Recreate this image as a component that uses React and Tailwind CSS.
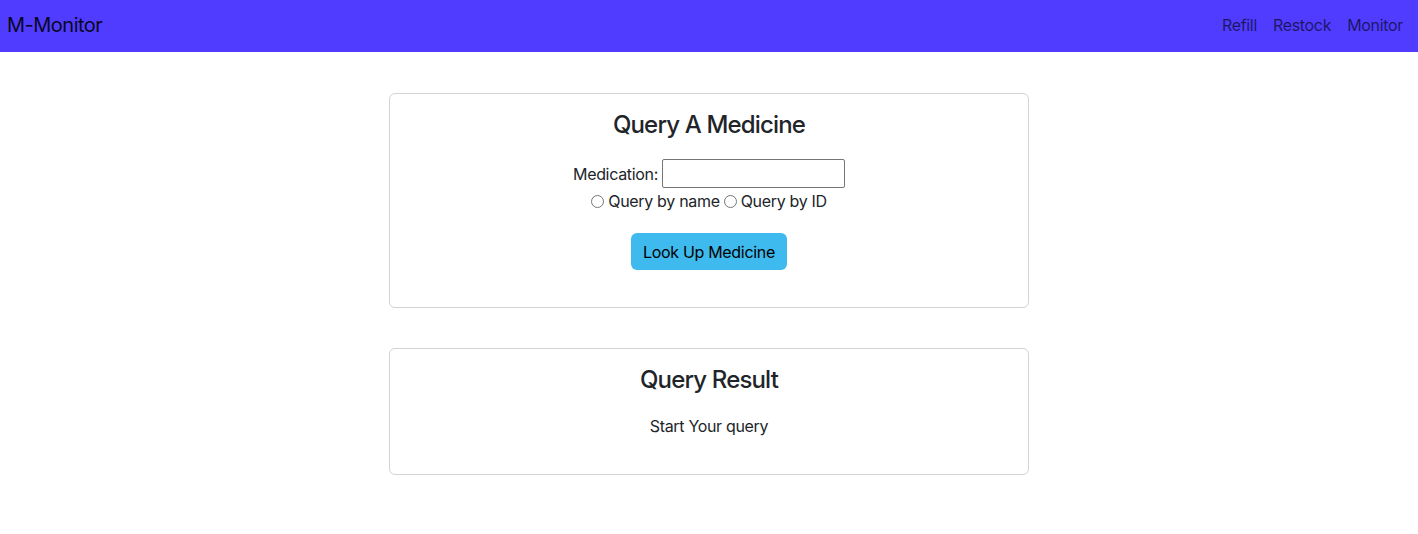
import React from "react";

export default function App() {
  return (
    <div className="min-h-[534px] bg-white text-[#212529] tracking-[-0.02em]" style={{ fontFamily: "Inter, 'Noto Sans', sans-serif" }}>
      <nav className="flex h-[52px] items-center justify-between bg-[#4f3cff] pl-[7px] pr-[7px] pb-[2px]">
        <span className="text-[20px] leading-[30px] text-[#000000e6] tracking-[-0.025em]">M-Monitor</span>
        <div className="flex text-[16px] leading-6 text-[#000000a0]">
          <a className="px-2">Refill</a>
          <a className="px-2">Restock</a>
          <a className="px-2">Monitor</a>
        </div>
      </nav>
      <div className="flex flex-col items-center pt-[41px]">
        <div className="w-[640px] rounded-[6px] border border-[#d3d3d3] px-4 pt-4 pb-[37px] text-center">
          <h3 className="text-[24px] font-medium leading-[29px] tracking-[-0.035em]">Query A Medicine</h3>
          <div className="mt-[20px] flex items-center justify-center text-[16px]">
            <label className="mr-[4px] leading-6">Medication:</label>
            <input type="text" className="h-[29px] w-[183px] rounded-[2px] border border-[#767676] bg-white px-1" />
          </div>
          <div className="mt-[1px] flex items-center justify-center text-[16px] leading-6">
            <input type="radio" name="q" className="mr-[4px] h-[13px] w-[13px]" />
            <span className="mr-[4px]">Query by name</span>
            <input type="radio" name="q" className="mr-[4px] h-[13px] w-[13px]" />
            <span>Query by ID</span>
          </div>
          <button className="mt-[20px] h-[37px] w-[156px] rounded-[6px] bg-[#3fbaee] text-[16px] text-black">
            Look Up Medicine
          </button>
        </div>
        <div className="mt-[40px] w-[640px] rounded-[6px] border border-[#d3d3d3] px-4 pt-4 pb-[36px] text-center">
          <h3 className="text-[24px] font-medium leading-[29px] tracking-[-0.035em]">Query Result</h3>
          <p className="mt-[20px] text-[16px] leading-6">Start Your query</p>
        </div>
      </div>
    </div>
  );
}
